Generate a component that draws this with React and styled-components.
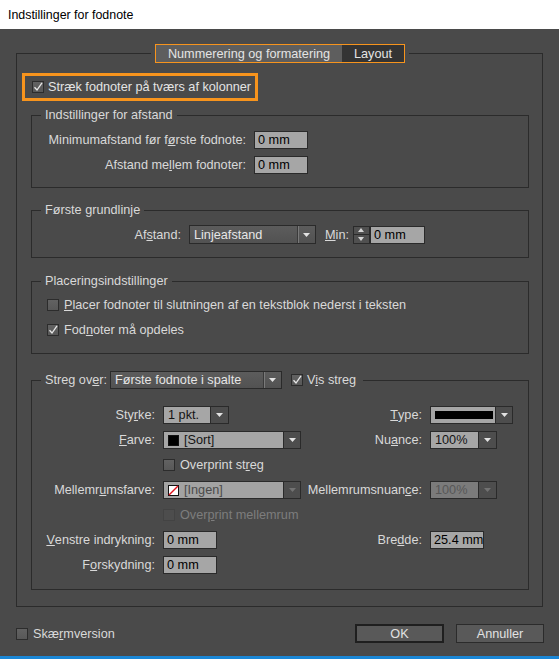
import React from 'react';
import styled, { createGlobalStyle, css } from 'styled-components';

const GlobalStyle = createGlobalStyle`
  * { box-sizing: border-box; }
  html, body { margin: 0; padding: 0; background: #4a4a4a; }
  body {
    font-family: "Liberation Sans", Arial, sans-serif;
    font-size: 12.7px;
    line-height: 14px;
    color: #d9d9d9;
  }
`;

const Window = styled.div`
  width: 559px;
  height: 659px;
  display: flex;
  flex-direction: column;
  background: #4a4a4a;
  border-bottom: 3px solid #1b87d6;
`;

const TitleBar = styled.div`
  flex: none;
  height: 29px;
  display: flex;
  align-items: center;
  padding-left: 8px;
  background: #fff;
  color: #000;
  font-size: 12.4px;
`;

const Body = styled.div`
  flex: 1;
  display: flex;
  flex-direction: column;
  padding: 15px 15px 0 16px;
`;

const Panel = styled.fieldset`
  margin: 0 1px 0 0;
  padding: 10px 13px 16px 14px;
  border: 1px solid #2b2b2b;
  min-width: 0;
`;

const TabBar = styled.legend`
  margin: 0 auto;
  padding: 0 4px;
`;

const TabGroup = styled.div`
  display: flex;
  border: 1px solid #f7941d;
`;

const Tab = styled.div`
  width: ${p => p.$w}px;
  height: 17px;
  display: flex;
  align-items: center;
  justify-content: center;
  background: ${p => (p.$active ? '#5e5e5e' : '#343434')};
  color: #e4e4e4;
`;

const Highlight = styled.div`
  display: flex;
  align-items: center;
  gap: 4px;
  width: 236px;
  height: 28px;
  margin-left: -9px;
  padding-left: 7px;
  border: 3px solid #f7941d;
  color: #e4e4e4;
`;

const Group = styled.fieldset`
  margin: ${p => p.$top}px 0 0;
  padding: 0;
  border: 1px solid #2b2b2b;
  min-width: 0;
`;

const GroupTitle = styled.legend`
  margin-left: 9px;
  padding: 0 ${p => p.$right ?? 4}px 0 4px;
  line-height: 14px;
`;

const LegendRow = styled.div`
  display: flex;
  align-items: center;
  height: 18px;
`;

const LegendLabel = styled.span`
  flex: none;
  width: 65px;
  white-space: nowrap;
`;

const Stack = styled.div`
  display: flex;
  flex-direction: column;
  gap: 7px;
  padding: ${p => p.$pad};
`;

const Row = styled.div`
  display: flex;
  align-items: center;
  height: ${p => p.$h || 18}px;
`;

const Label = styled.span`
  flex: none;
  width: ${p => (p.$w ? `${p.$w}px` : 'auto')};
  padding-right: ${p => p.$pr ?? 8}px;
  text-align: right;
  white-space: nowrap;
  margin-left: ${p => p.$ml || 0}px;
`;

const U = styled.u`
  text-decoration: underline;
  text-underline-offset: 1px;
`;

const Field = styled.input`
  flex: none;
  width: ${p => p.$w}px;
  height: 18px;
  margin: 0;
  padding: 0 0 0 3px;
  border: 1px solid #2a2a2a;
  background: #a6a6a6;
  color: #000;
  font: inherit;
  outline: none;
`;

const SelectBox = styled.div`
  flex: none;
  display: flex;
  width: ${p => p.$w}px;
  height: ${p => p.$h || 18}px;
  border: 1px solid #2a2a2a;
`;

const valueTones = {
  dark: css`
    background: linear-gradient(#5c5c5c, #525252);
    color: #e6e6e6;
  `,
  light: css`
    background: #a6a6a6;
    color: #141414;
  `,
  disabled: css`
    background: #a3a3a3;
    color: #4b4b4b;
  `,
  muted: css`
    background: #7b7b7b;
    color: #575757;
  `,
};

const SelectValue = styled.div`
  flex: 1;
  display: flex;
  align-items: center;
  gap: 5px;
  padding-left: 4px;
  white-space: nowrap;
  overflow: hidden;
  ${p => valueTones[p.$tone]}
`;

const SelectButton = styled.div`
  flex: none;
  width: ${p => p.$w || 18}px;
  display: flex;
  align-items: center;
  justify-content: center;
  background: ${p => (p.$tone === 'dark' ? 'linear-gradient(#5c5c5c, #525252)' : '#4d4d4d')};
  border-left: 1px solid ${p => (p.$tone === 'dark' ? '#3a3a3a' : '#2a2a2a')};
  box-shadow: ${p => (p.$tone === 'dark' ? 'inset 1px 0 0 #7a7a7a' : 'none')};
`;

const Swatch = styled.span`
  flex: none;
  width: 11px;
  height: 11px;
  background: ${p => p.$c};
  border: 1px solid #111;
`;

const LineBar = styled.span`
  flex: none;
  width: 58px;
  height: 8px;
  background: #000;
`;

const Spinner = styled.div`
  flex: none;
  width: 17px;
  height: 18px;
  margin-left: 4px;
  display: flex;
  flex-direction: column;
  border: 1px solid #2a2a2a;
  background: #505050;
`;

const SpinHalf = styled.div`
  flex: 1;
  display: flex;
  align-items: center;
  justify-content: center;
  & + & {
    border-top: 1px solid #2a2a2a;
  }
`;

const Box = styled.span`
  flex: none;
  width: 12px;
  height: 12px;
  display: flex;
  align-items: center;
  justify-content: center;
  border: 1px solid ${p => (p.$disabled ? '#434343' : '#2c2c2c')};
  background: ${p => (p.$disabled ? '#4d4d4d' : 'linear-gradient(#626262, #585858)')};
`;

const CheckRow = styled.div`
  display: flex;
  align-items: center;
  gap: ${p => p.$gap ?? 5}px;
  height: 18px;
  padding-left: ${p => p.$pl || 0}px;
  margin-left: ${p => p.$ml || 0}px;
  color: ${p => (p.$disabled ? '#7d7d7d' : '#d9d9d9')};
`;

const StrokeGrid = styled.div`
  display: grid;
  grid-template-columns: 123px 138px 113px auto;
  grid-auto-rows: 18px;
  column-gap: 8px;
  row-gap: 7px;
  align-items: center;
  padding: 17px 0 15px;
`;

const Cell = styled.div`
  display: flex;
  align-items: center;
  justify-content: ${p => (p.$end ? 'flex-end' : 'flex-start')};
  grid-column: ${p => p.$col || 'auto'};
  white-space: nowrap;
`;

const Footer = styled.div`
  display: flex;
  align-items: center;
  height: 19px;
  margin-top: 17px;
`;

const Buttons = styled.div`
  margin-left: auto;
  display: flex;
  gap: 12px;
`;

const Button = styled.button`
  width: ${p => p.$w}px;
  height: 19px;
  padding: 0;
  font: inherit;
  color: #e2e2e2;
  background: #595959;
  border: ${p => (p.$primary ? '2px solid #1f1f1f' : '1px solid #2b2b2b')};
`;

const Arrow = ({ color = '#e2e2e2' }) => (
  <svg width="7" height="4" viewBox="0 0 7 4">
    <polygon points="0,0 7,0 3.5,4" fill={color} />
  </svg>
);

const Check = ({ checked, disabled }) => (
  <Box $disabled={disabled}>
    {checked && (
      <svg width="10" height="10" viewBox="0 0 10 10">
        <path d="M1.5 5.2 L4 8 L9 0.8" stroke="#e8e8e8" strokeWidth="1.3" fill="none" />
      </svg>
    )}
  </Box>
);

const Select = ({ w, h, tone = 'light', btnTone, btnW, arrow, children }) => (
  <SelectBox $w={w} $h={h}>
    <SelectValue $tone={tone}>{children}</SelectValue>
    <SelectButton $tone={btnTone || tone} $w={btnW}>
      <Arrow color={arrow} />
    </SelectButton>
  </SelectBox>
);

const NoneSwatch = () => (
  <svg width="11" height="11" viewBox="0 0 11 11">
    <rect x="0.5" y="0.5" width="10" height="10" fill="#fff" stroke="#111" />
    <line x1="1" y1="10" x2="10" y2="1" stroke="#e0141e" strokeWidth="1.5" />
  </svg>
);

export default function App() {
  return (
    <Window>
      <GlobalStyle />
      <TitleBar>Indstillinger for fodnote</TitleBar>
      <Body>
        <Panel>
          <TabBar>
            <TabGroup>
              <Tab $w={186} $active>Nummerering og formatering</Tab>
              <Tab $w={62}>Layout</Tab>
            </TabGroup>
          </TabBar>

          <Highlight>
            <Check checked />
            Stræk fodnoter på tværs af kolonner
          </Highlight>

          <Group $top={7}>
            <GroupTitle>Indstillinger for afstand</GroupTitle>
            <Stack $pad="9px 0 13px">
              <Row>
                <Label $w={222}>Minimumafstand før f<U>ø</U>rste fodnote:</Label>
                <Field $w={54} defaultValue="0 mm" readOnly />
              </Row>
              <Row>
                <Label $w={222}>Afstand me<U>l</U>lem fodnoter:</Label>
                <Field $w={54} defaultValue="0 mm" readOnly />
              </Row>
            </Stack>
          </Group>

          <Group $top={15}>
            <GroupTitle>Første grundlinje</GroupTitle>
            <Stack $pad="8px 0 13px">
              <Row $h={19}>
                <Label $w={157}>Af<U>s</U>tand:</Label>
                <Select w={127} h={19} tone="dark">Linjeafstand</Select>
                <Label $ml={9} $pr={0}><U>M</U>in:</Label>
                <Spinner>
                  <SpinHalf>
                    <svg width="6" height="4" viewBox="0 0 6 4"><polygon points="0,4 6,4 3,0" fill="#d6d6d6" /></svg>
                  </SpinHalf>
                  <SpinHalf>
                    <svg width="6" height="4" viewBox="0 0 6 4"><polygon points="0,0 6,0 3,4" fill="#d6d6d6" /></svg>
                  </SpinHalf>
                </Spinner>
                <Field $w={55} defaultValue="0 mm" readOnly />
              </Row>
            </Stack>
          </Group>

          <Group $top={16}>
            <GroupTitle>Placeringsindstillinger</GroupTitle>
            <Stack $pad="8px 0 14px">
              <CheckRow $pl={15}>
                <Check />
                <span><U>P</U>lacer fodnoter til slutningen af en tekstblok nederst i teksten</span>
              </CheckRow>
              <CheckRow $pl={15}>
                <Check checked />
                <span>Fod<U>n</U>oter må opdeles</span>
              </CheckRow>
            </Stack>
          </Group>

          <Group $top={17}>
            <GroupTitle $right={7}>
              <LegendRow>
                <LegendLabel>Streg ov<U>e</U>r:</LegendLabel>
                <Select w={172} tone="dark">Første fodnote i spalte</Select>
                <CheckRow $gap={4} $ml={9}>
                  <Check checked />
                  <span>V<U>i</U>s streg</span>
                </CheckRow>
              </LegendRow>
            </GroupTitle>
            <StrokeGrid>
              <Cell $end>Sty<U>r</U>ke:</Cell>
              <Cell>
                <Select w={66} btnW={18}>1 pkt.</Select>
              </Cell>
              <Cell $end><U>T</U>ype:</Cell>
              <Cell>
                <Select w={83} btnW={17}>
                  <LineBar />
                </Select>
              </Cell>

              <Cell $end><U>F</U>arve:</Cell>
              <Cell>
                <Select w={138} btnW={17}>
                  <Swatch $c="#000" />
                  [Sort]
                </Select>
              </Cell>
              <Cell $end>Nu<U>a</U>nce:</Cell>
              <Cell>
                <Select w={67} btnW={18}>100%</Select>
              </Cell>

              <Cell $col="2 / span 3">
                <CheckRow>
                  <Check />
                  <span>Overprint st<U>r</U>eg</span>
                </CheckRow>
              </Cell>

              <Cell $end>Mellemr<U>u</U>msfarve:</Cell>
              <Cell>
                <Select w={138} btnW={17} tone="disabled" btnTone="light" arrow="#727272">
                  <NoneSwatch />
                  [Ingen]
                </Select>
              </Cell>
              <Cell $end>Mellemrumsnuan<U>c</U>e:</Cell>
              <Cell>
                <Select w={67} btnW={18} tone="muted" btnTone="light" arrow="#727272">100%</Select>
              </Cell>

              <Cell $col="2 / span 3">
                <CheckRow $disabled>
                  <Check disabled />
                  <span>Over<U>p</U>rint mellemrum</span>
                </CheckRow>
              </Cell>

              <Cell $end><U>V</U>enstre indrykning:</Cell>
              <Cell>
                <Field $w={54} defaultValue="0 mm" readOnly />
              </Cell>
              <Cell $end>Bre<U>d</U>de:</Cell>
              <Cell>
                <Field $w={54} defaultValue="25.4 mm" readOnly />
              </Cell>

              <Cell $end>F<U>o</U>rskydning:</Cell>
              <Cell>
                <Field $w={54} defaultValue="0 mm" readOnly />
              </Cell>
            </StrokeGrid>
          </Group>
        </Panel>

        <Footer>
          <CheckRow>
            <Check />
            <span>Skæ<U>r</U>mversion</span>
          </CheckRow>
          <Buttons>
            <Button $w={89} $primary>OK</Button>
            <Button $w={88}>Annuller</Button>
          </Buttons>
        </Footer>
      </Body>
    </Window>
  );
}
